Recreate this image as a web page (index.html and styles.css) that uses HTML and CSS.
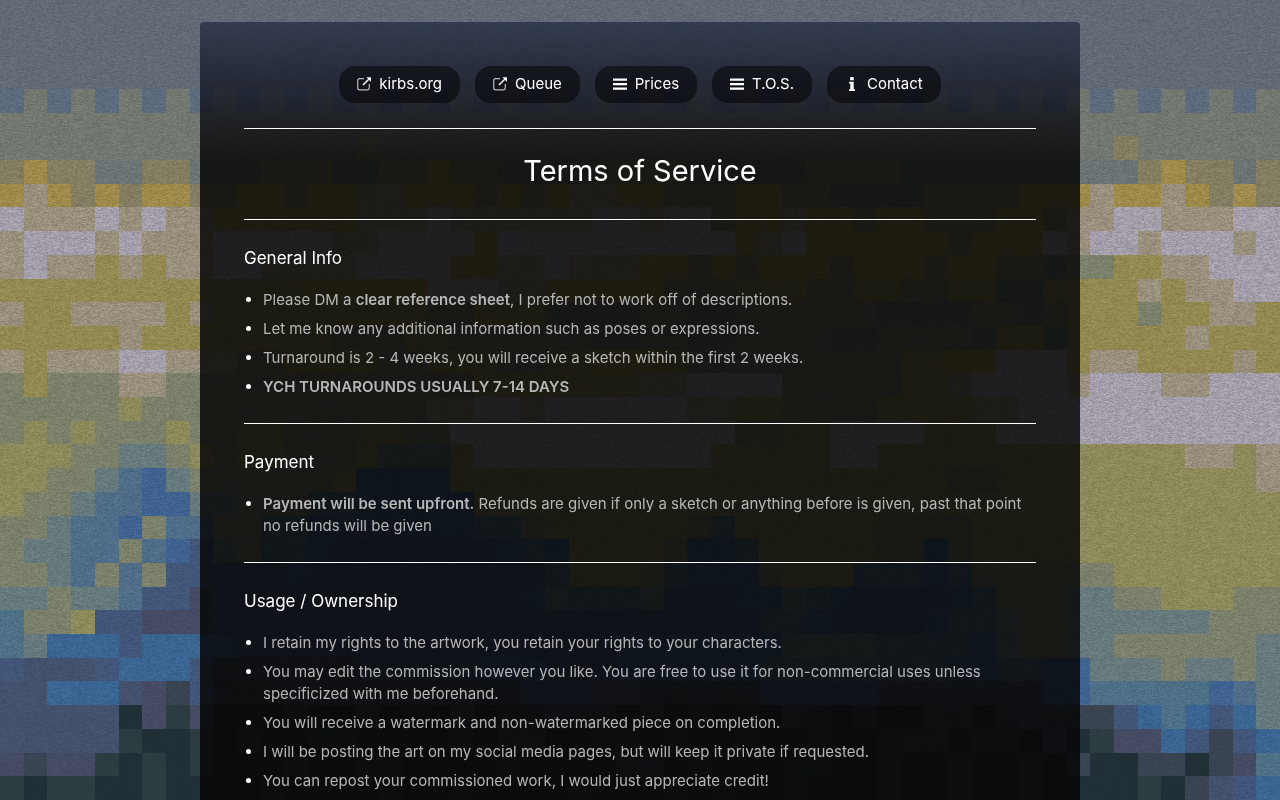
FILE: index.html
```html
<!DOCTYPE html>
<html lang="en">

<head>
    <meta charset="utf-8">
    <meta name="viewport" content="width=device-width, initial-scale=1">
    <title>Terms of Service</title>
    <link rel="stylesheet" href="styles.css">
</head>

<body>
    <canvas id="backdrop" class="backdrop" aria-hidden="true"></canvas>
    <main class="panel">
        <nav class="links">
            <a class="button" href="#home">
                <svg class="icon" viewBox="0 0 14 14" fill="none" stroke="currentColor">
                    <path d="M7 1.7H2.7a2 2 0 0 0-2 2v7.1a2 2 0 0 0 2 2h7.6a2 2 0 0 0 2-2V7" opacity=".7" stroke-width="1.2" />
                    <path d="M6 8L12 2" stroke-width="1.5" />
                    <path d="M9.4.2H14v4.6z" fill="currentColor" stroke="none" />
                </svg>
                kirbs.org</a>
            <a class="button" href="#queue">
                <svg class="icon" viewBox="0 0 14 14" fill="none" stroke="currentColor">
                    <path d="M7 1.7H2.7a2 2 0 0 0-2 2v7.1a2 2 0 0 0 2 2h7.6a2 2 0 0 0 2-2V7" opacity=".7" stroke-width="1.2" />
                    <path d="M6 8L12 2" stroke-width="1.5" />
                    <path d="M9.4.2H14v4.6z" fill="currentColor" stroke="none" />
                </svg>
                Queue</a>
            <a class="button" href="#prices">
                <svg class="icon" viewBox="0 0 14 14" fill="currentColor">
                    <path d="M0 1.5h14v2.2H0zM0 6h14v2.2H0zM0 10.5h14v2.2H0z" />
                </svg>
                Prices</a>
            <a class="button" href="#tos">
                <svg class="icon" viewBox="0 0 14 14" fill="currentColor">
                    <path d="M0 1.5h14v2.2H0zM0 6h14v2.2H0zM0 10.5h14v2.2H0z" />
                </svg>
                T.O.S.</a>
            <a class="button" href="#contact">
                <svg class="icon" viewBox="0 0 14 14" fill="currentColor">
                    <path d="M5.2 0h3.5v3.2H5.2zM4.1 4.8h4.6v7.4H10V14H4.1v-1.8h1.2V6.6H4.1z" />
                </svg>
                Contact</a>
        </nav>
        <hr>
        <h1>Terms of Service</h1>
        <hr>
        <h2>General Info</h2>
        <ul>
            <li><span>Please DM a <strong>clear reference sheet</strong>, I prefer not to work off of descriptions.</span></li>
            <li><span>Let me know any additional information such as poses or expressions.</span></li>
            <li><span>Turnaround is 2 - 4 weeks, you will receive a sketch within the first 2 weeks.</span></li>
            <li><span><strong>YCH TURNAROUNDS USUALLY 7-14 DAYS</strong></span></li>
        </ul>
        <hr>
        <h2>Payment</h2>
        <ul>
            <li><span><strong>Payment will be sent upfront.</strong> Refunds are given if only a sketch or anything before is given, past that point no refunds will be given</span></li>
        </ul>
        <hr>
        <h2>Usage / Ownership</h2>
        <ul>
            <li><span>I retain my rights to the artwork, you retain your rights to your characters.</span></li>
            <li><span>You may edit the commission however you like. You are free to use it for non-commercial uses unless specificized with me beforehand.</span></li>
            <li><span>You will receive a watermark and non-watermarked piece on completion.</span></li>
            <li><span>I will be posting the art on my social media pages, but will keep it private if requested.</span></li>
            <li><span>You can repost your commissioned work, I would just appreciate credit!</span></li>
        </ul>
    </main>
    <script src="backdrop.js"></script>
</body>

</html>
```

FILE: styles.css
```css
body {
    margin: 0;
    padding: 22px 0 0;
    background: #3a4352;
    color: #fff;
    font-family: Inter, "Liberation Sans", sans-serif;
    font-size: 15px;
    line-height: 22px;
}

/* pixel landscape, stays put while the panel scrolls */
.backdrop {
    position: fixed;
    top: 0;
    left: 0;
    width: 100%;
    height: 100%;
    z-index: -1;
}

.panel {
    box-sizing: border-box;
    max-width: 880px;
    margin: 0 auto;
    padding: 44px;
    border-radius: 4px;
    background: linear-gradient(rgba(36, 43, 68, 0.75), rgba(5, 5, 5, 0.84) 136px);
}

.links {
    display: flex;
    flex-wrap: wrap;
    justify-content: center;
    gap: 15px;
}

.button {
    display: flex;
    align-items: center;
    gap: 8px;
    box-sizing: border-box;
    height: 37px;
    padding: 0 18px 1px;
    border-radius: 16px;
    background: rgba(0, 0, 0, 0.5);
    color: #fff;
    text-decoration: none;
}

.icon {
    width: 14px;
    height: 14px;
}

hr {
    height: 1px;
    margin: 25px 0;
    border: 0;
    background: #fff;
}

h1 {
    margin: 0;
    padding-bottom: 6px;
    font-size: 29px;
    font-weight: 400;
    line-height: 34px;
    text-align: center;
}

h2 {
    margin: 0;
    font-size: 17px;
    font-weight: 400;
    line-height: 26px;
}

ul {
    display: flex;
    flex-direction: column;
    gap: 7px;
    margin: 18px 0 0;
    padding-left: 19px;
}

li span {
    color: #b6b6b6;
}

strong {
    font-weight: 600;
}
```

FILE: backdrop.js
```js
const palette = {
    a: "#626b75", b: "#5b6b7d", c: "#727770", d: "#6a7474", e: "#837e62",
    f: "#9e8b4b", g: "#998f7d", h: "#a39ea9", i: "#928950", j: "#7a806a",
    k: "#8c8a5a", l: "#66797c", m: "#4f6c88", n: "#3f6290", o: "#42567a",
    p: "#44516c", q: "#2d3c40", r: "#203036", s: "#3a4352", t: "#454b62",
    u: "#3a6492", v: "#4d7086"
};

// one letter per block, 54 blocks wide, lined up with the bottom edge
const rows = [
    "aaaaaaaaaaaaaaaaaaaaaaaaaaaaaaaaaaaaaaaaaaaaaaaaaaaaaa",
    "aaaaaaaaaaaaaaaaaaaaaaaaaaaaaaaaaaaaaaaaaaaaaaaaaaaaaa",
    "aaaaaaaaaaaaaaaaaaaaaaaaaaaaaaaaaaaaaaaaaaaaaaaaaaaaaa",
    "aaaaaaaaaaaaaaaaaaaaaaaaaaaaaaaaaaaaaaaaaaaaaaaaaaaaaa",
    "bcbcbcbcb" + "cbcbcbcbcbcbcbcbcbcbcbcbcbcbcbcbcbcb" + "cbcbcbcbc",
    "ccccccccc" + "cccccccccccccccccccccccccccccccccccc" + "ccccccccc",
    "ccccccccc" + "cccccceccccccccccccccccccccccccccccc" + "ccecccccc",
    "efeeddeed" + "ddeeeddeefeeddddeeeedddddeeeeddddddd" + "dddefeede",
    "fgfefeffe" + "effeffggfffefefggffeeeffeeddddeeeeff" + "fgffgfefe",
    "hggghghgg" + "ffffffggghgggggghhghheffgffeffeeeffe" + "gghhggghh",
    "ghhhghggg" + "hhhhhgghhhhfhhhhhhhhhhfghffffffefffh" + "ghhghhhgh",
    "ghggigigg" + "hhgggghhhhffgghgggffefefffefffeffeed" + "jjiigghhh",
    "iiiiiiiii" + "iiiifffffhhhggfffffjjjiiijjiijjiiddi" + "iiigigghh",
    "giiggggig" + "iiiiiiiiijjiiiddddjjddjjjjjjddddjjdj" + "iiijiiggi",
    "iiiiigiii" + "iiiiijjjiijjjjjjddjjddjjjjddjjjjdiid" + "iiiiigiii",
    "giggghhgg" + "gjjiiiijjiiijjiifffijjjjjjjjjiiffhhh" + "iggiiiigi",
    "jijjjggjj" + "jjjjjjjjjjjiiiiiiigghhhhjjjjjiighhhh" + "ghhhgghhh",
    "jjjjjkjjj" + "jjjjjjjjjgghhghhhhhhggiijjjjiiiigghh" + "hhhhhhhhh",
    "jkjkjjjkj" + "jkkjjjkkjjhhhhhhhhhhhhjjkkhhhhkkkhhh" + "hhhhhhhhh",
    "kkkjjlljk" + "jkkjjjklllkhhhhhhhhhhkkkkkhhkkkkkkkk" + "kkkkkggkg",
    "kkjjlmnlj" + "jjjjjknnnnkkkkkkkkkkkkkkkkkkkkkjjkkk" + "kkkkkkkkg",
    "kjjlmmnnl" + "ljjjmmnnnnnkkkkkkkkkkkkkkkkkkkkkkkkk" + "kkkkkkkkk",
    "jjlmmnjmm" + "jjmmnnnnnnnmmjkkkkkkjmkkkkkkjjjjkkkk" + "kkkkkkkkk",
    "jllmmjmno" + "ljmmnooooooonmnkkkkjnnmkkkkkjjnjkkkk" + "kkkkkkkkk",
    "jjlmjmjoo" + "ooonoooooooooomkkkjmnnnjkkkmmmnmjjjj" + "jjkkkkkkk",
    "lljllmoot" + "ooooooooooooonlmmmlooonnlmnoooonmjjj" + "lljjkkkjj",
    "vjjkoottt" + "ooooooooooooooooooooooommnoooonmmljj" + "lllllljjj",
    "vluuuouuu" + "uoooooooooooooooouuuuuuullllmmmmuljj" + "lljjjjjjl",
    "opppouuuo" + "stttttooooouuuooouuuuuummmmmmmmuummu" + "nllljlljl",
    "ppuuuptso" + "sssttttttttttooopptstssoooootttttttn" + "nvvvvvnml",
    "ppppprtqt" + "rrrqrrsrqrsrqqtssrsrqrqrsqrqrrssrsts" + "ssouvuoul",
    "pppppqrrq" + "rqrrqqrrrrqrssrrqqrqrrqrrqrrqssrqqrt" + "rqttuosou",
    "tsttqrqrq" + "rrrqrrqqrrrrqrrrrssrqrrrqqrrqrrqrrqr" + "srrssrstv",
    "qrqqrrqrr" + "rrqrrrrqrrqrrrrqrrrqrqrrqrrrqrrqrrqr" + "rrrqrspou"
];

const canvas = document.getElementById("backdrop");
const ctx = canvas.getContext("2d");

function draw() {
    const w = canvas.width = window.innerWidth;
    const h = canvas.height = window.innerHeight;
    const size = Math.max(w / 54, h / 34);
    const left = (w - size * 54) / 2;
    const top = h - size * rows.length;

    rows.forEach((row, y) => {
        for (let x = 0; x < 54; x++) {
            const x0 = Math.round(left + x * size);
            const y0 = Math.round(top + y * size);
            ctx.fillStyle = palette[row[x]];
            ctx.fillRect(x0, y0, Math.ceil(size), Math.ceil(size));
        }
    });

    // paper grain, weaker on the dark blocks
    const image = ctx.getImageData(0, 0, w, h);
    const px = image.data;
    let seed = 7;
    let last = 0;
    for (let i = 0; i < px.length; i += 4) {
        seed = (seed * 1664525 + 1013904223) >>> 0;
        last = last * 0.35 + (seed / 4294967296 - 0.5) * 0.65;
        const light = px[i] + px[i + 1] + px[i + 2];
        const grain = last * light / 3 * Math.min(1, light / 400) * 0.3;
        px[i] += grain;
        px[i + 1] += grain;
        px[i + 2] += grain;
    }
    ctx.putImageData(image, 0, 0);
}

window.addEventListener("resize", draw);
draw();
```
